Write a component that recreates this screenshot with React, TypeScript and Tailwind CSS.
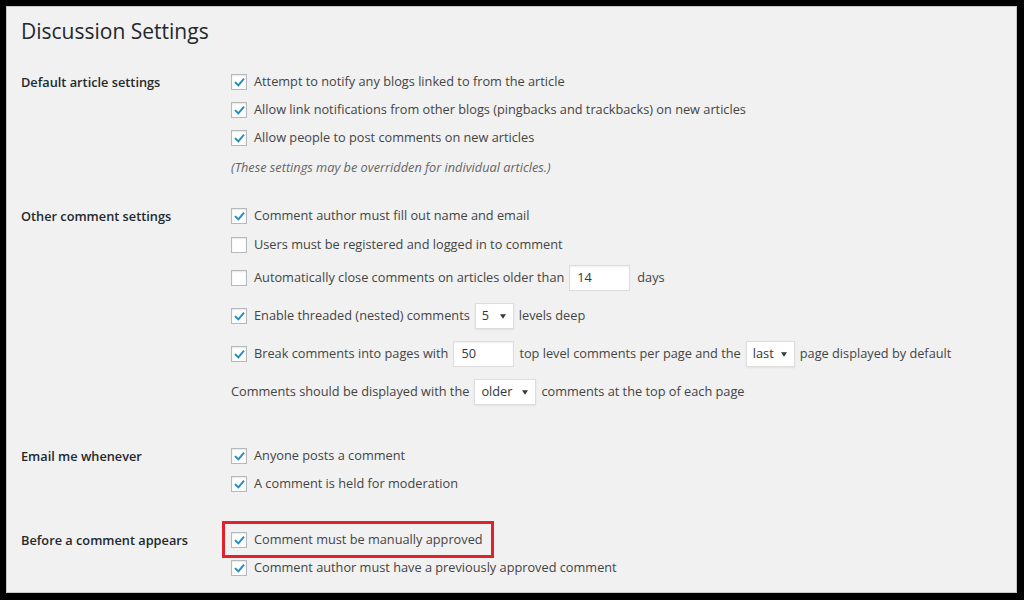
import type { ReactNode } from 'react';

function Checkbox({ checked }: { checked: boolean }) {
  return (
    <span className="w-4 h-4 shrink-0 bg-white border border-[#b4b9be] shadow-[inset_0_1px_2px_rgba(0,0,0,0.1)] flex items-center justify-center">
      {checked && (
        <svg viewBox="0 0 16 16" className="w-[13px] h-[13px]">
          <path d="M3.2 8.3 L6.6 11.6 L12.8 4.2" fill="none" stroke="#1e8cbe" strokeWidth="2.3" strokeLinecap="square" />
        </svg>
      )}
    </span>
  );
}

function TextInput({ value, w }: { value: string; w: string }) {
  return (
    <span className={`${w} h-[26px] bg-white border border-[#dddddd] shadow-[inset_0_1px_2px_rgba(0,0,0,0.07)] flex items-center px-[7px] text-[#32373c]`}>
      {value}
    </span>
  );
}

function Select({ value, w }: { value: string; w: string }) {
  return (
    <span className={`${w} h-[26px] bg-white border border-[#dddddd] shadow-[0_1px_2px_rgba(0,0,0,0.07)] flex items-center justify-between pl-[6px] pr-[7px] text-[#32373c]`}>
      <span>{value}</span>
      <svg viewBox="0 0 8 6" className="w-[6px] h-[5px]">
        <path d="M0 0 H8 L4 6 Z" fill="#32373c" />
      </svg>
    </span>
  );
}

function Row({ h = 'h-[28px]', children }: { h?: string; children: ReactNode }) {
  return <div className={`${h} flex items-center gap-[7px] whitespace-nowrap`}>{children}</div>;
}

function CheckRow({ checked, h, children }: { checked: boolean; h?: string; children: ReactNode }) {
  return (
    <Row h={h}>
      <Checkbox checked={checked} />
      <span className="flex items-center gap-[5px]">{children}</span>
    </Row>
  );
}

function Section({ label, className, children }: { label: string; className?: string; children: ReactNode }) {
  return (
    <div className={`grid grid-cols-[224px_1fr] ${className ?? ''}`}>
      <div className="h-[30px] flex items-center pl-[14px] font-semibold text-[#23282d]">{label}</div>
      <div className="flex flex-col">{children}</div>
    </div>
  );
}

export default function App() {
  return (
    <div className="w-[1024px] h-[600px] bg-black pt-[6px] pl-[6px] overflow-hidden font-['Open_Sans',sans-serif] text-[12.75px] text-[#444]">
      <div className="w-[1011px] h-[587px] bg-[#f1f1f1] border border-[#c8c8c8]">
        <div className="h-[50px] flex items-center pl-[14px]">
          <h1 className="text-[21px] font-normal text-[#23282d]">Discussion Settings</h1>
        </div>

        <Section label="Default article settings" className="mt-[11px]">
          <CheckRow checked>Attempt to notify any blogs linked to from the article</CheckRow>
          <CheckRow checked>Allow link notifications from other blogs (pingbacks and trackbacks) on new articles</CheckRow>
          <CheckRow checked>Allow people to post comments on new articles</CheckRow>
          <Row h="h-[29px] mt-px">
            <span className="italic text-[#666]">(These settings may be overridden for individual articles.)</span>
          </Row>
        </Section>

        <Section label="Other comment settings" className="mt-[20px]">
          <CheckRow checked>Comment author must fill out name and email</CheckRow>
          <CheckRow checked={false} h="h-[29px]">Users must be registered and logged in to comment</CheckRow>
          <CheckRow checked={false} h="h-[38px]">
            <span>Automatically close comments on articles older than</span>
            <TextInput value="14" w="w-[61px]" />
            <span className="ml-[2px]">days</span>
          </CheckRow>
          <CheckRow checked h="h-[38px]">
            <span>Enable threaded (nested) comments</span>
            <Select value="5" w="w-[39px]" />
            <span>levels deep</span>
          </CheckRow>
          <CheckRow checked h="h-[38px]">
            <span>Break comments into pages with</span>
            <TextInput value="50" w="w-[61px]" />
            <span>top level comments per page and the</span>
            <Select value="last" w="w-[49px]" />
            <span>page displayed by default</span>
          </CheckRow>
          <Row h="h-[38px]">
            <span className="flex items-center gap-[5px]">
              <span>Comments should be displayed with the</span>
              <Select value="older" w="w-[62px]" />
              <span>comments at the top of each page</span>
            </span>
          </Row>
        </Section>

        <Section label="Email me whenever" className="mt-[31px]">
          <CheckRow checked>Anyone posts a comment</CheckRow>
          <CheckRow checked>A comment is held for moderation</CheckRow>
        </Section>

        <Section label="Before a comment appears" className="mt-[28px]">
          <div className="relative">
            <CheckRow checked>Comment must be manually approved</CheckRow>
            <div className="absolute left-[-9px] top-[-5px] w-[272px] h-[37px] border-[3px] border-[#e3212d] pointer-events-none" />
          </div>
          <CheckRow checked>Comment author must have a previously approved comment</CheckRow>
        </Section>
      </div>
    </div>
  );
}
